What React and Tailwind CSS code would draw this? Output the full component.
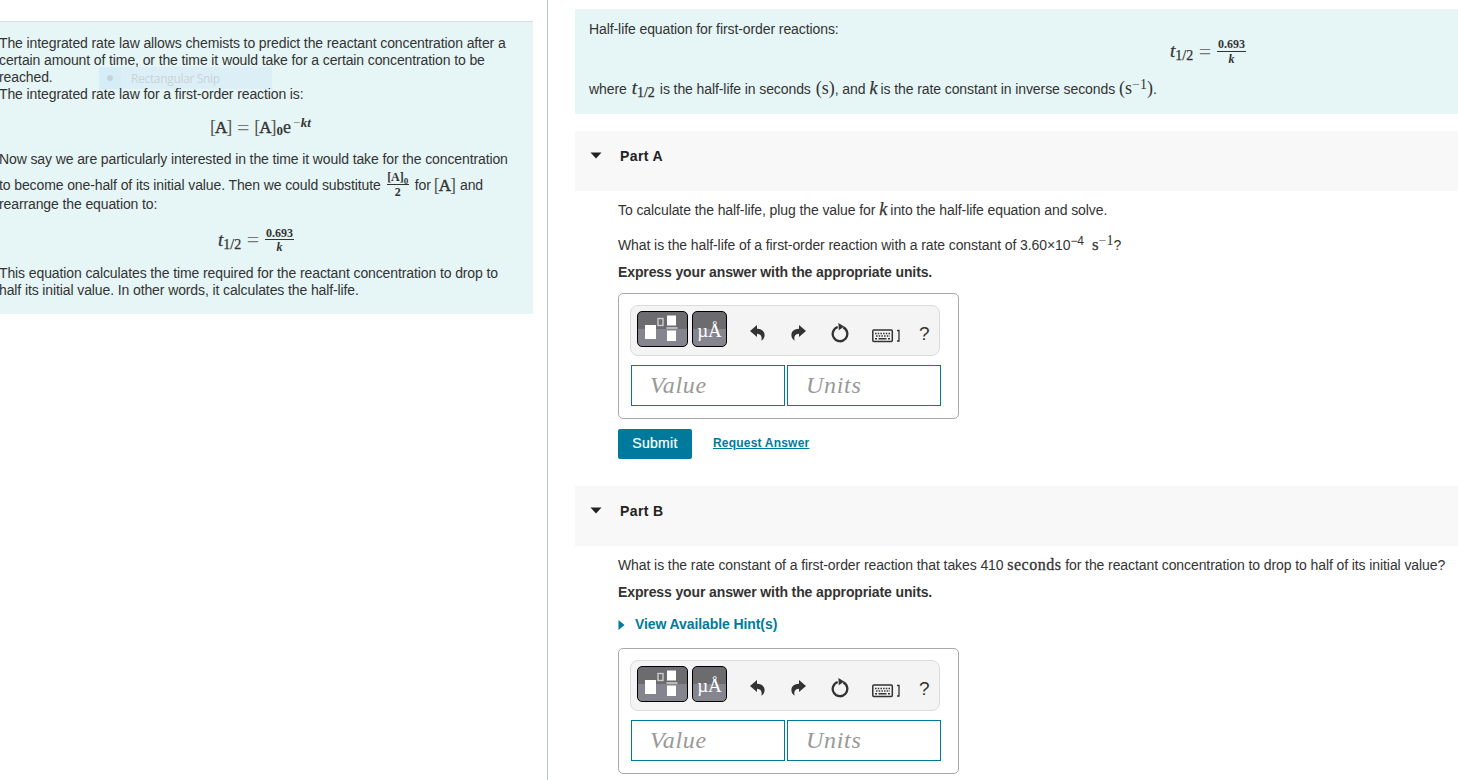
import clsx from "clsx";

const serif = "font-['Liberation_Serif',serif] tracking-normal";

const Fraction = ({ top, bottom, className }) => {
    return (
        <span className={clsx("inline-flex flex-col items-center text-[12px] leading-[12px]", serif, className)}>
            <span className="flex h-[14px] w-full items-center justify-center border-b border-[#333]">{top}</span>
            <span className="flex h-[14px] items-center">{bottom}</span>
        </span>
    );
}

const THalf = ({ className }) => {
    return (
        <span className={clsx("inline-flex items-baseline [-webkit-text-stroke:0.25px_#333]", serif, className)}>
            <i className="text-[19px] leading-none">t</i>
            <span className="relative top-[3px] text-[14px] leading-none">1/2</span>
        </span>
    );
}

// [A] concentration symbol
const Conc = ({ className }) => {
    return (
        <span className={clsx("inline-flex items-center text-[17px]", serif, className)}>
            <span className="text-[18px] text-[#555]">[</span>
            <span className="-mx-[1px] [-webkit-text-stroke:0.5px_#333]">A</span>
            <span className="text-[18px] text-[#555]">]</span>
        </span>
    );
}

const HalfLifeEquation = () => {
    return (
        <div className={clsx("flex h-[29px] w-[76px] items-center justify-between", serif)}>
            <THalf className="-mt-[2px]" />
            <span className="w-[13px] text-center text-[22px] leading-none text-[#777]">=</span>
            <Fraction className="w-[29px] font-bold" top="0.693" bottom={<i>k</i>} />
        </div>
    );
}

const UndoArrow = ({ className }) => {
    return (
        <svg className={className} width="15" height="16" viewBox="0 0 15 16" fill="#333">
            <path d="M0 6 L7 0 V3.8 C12 4 14.6 6.5 14.6 10 C14.6 12.5 13.6 14.3 11.3 15.8 C12.4 11.7 11 9 7 8.8 V12 Z" />
        </svg>
    );
}

const Toolbar = () => {
    return (
        <div className="flex h-[51px] w-[310px] items-start rounded-[8px] border border-[#dcdcdc] bg-[#f4f4f4] pl-[6px] pt-[5px]">
            <div className="h-[36px] w-[51px] rounded-[5px] border border-black bg-linear-to-b from-[#6c6c6e] from-50% to-[#85858f] to-50%">
                <svg width="49" height="34" viewBox="0 0 49 34">
                    <rect x="7" y="13" width="11" height="14" fill="#fff" />
                    <rect x="20" y="6.5" width="5" height="7" fill="none" stroke="#ccc" strokeWidth="1.4" />
                    <rect x="29" y="3.5" width="9" height="10" fill="#fff" />
                    <rect x="28.5" y="15" width="11" height="2" fill="#bbb" />
                    <rect x="29" y="18.5" width="9" height="10.5" fill="#fff" />
                </svg>
            </div>
            <div className={clsx("ml-[4px] flex h-[36px] w-[35px] items-center justify-center rounded-[5px] border border-black bg-linear-to-b from-[#6c6c6e] from-50% to-[#85858f] to-50% pt-[2px] text-[19px] leading-none text-white", serif)}>
                µÅ
            </div>
            <UndoArrow className="ml-[23px] mt-[14px]" />
            <UndoArrow className="ml-[26px] mt-[14px] -scale-x-100" />
            <svg className="ml-[25px] mt-[12px]" width="19" height="20" viewBox="0 0 19 20">
                <path d="M12.6 4.4 A7.3 7.3 0 1 1 7 4" fill="none" stroke="#333" strokeWidth="2.3" transform="translate(-0.3 0)" />
                <path d="M7.4 0 L13.2 3.6 L7.8 7.2 Z" fill="#333" />
            </svg>
            <svg className="ml-[22px] mt-[18px]" width="29" height="14" viewBox="0 0 29 14">
                <rect x="0.8" y="1" width="19.5" height="11.5" rx="1" fill="none" stroke="#333" strokeWidth="1.5" />
                <path d="M3 4.5h15M4 7h14" stroke="#333" strokeWidth="1.6" strokeDasharray="1.5 1.2" />
                <path d="M3 9.8h2M6.5 9.8h8M16 9.8h2" stroke="#333" strokeWidth="1.4" />
                <path d="M25 1.5h2v10.5h-2" fill="none" stroke="#333" strokeWidth="1.3" />
            </svg>
            <span className="ml-[18px] mt-[12px] text-[19px] leading-[22px] text-[#333]">?</span>
        </div>
    );
}

const AnswerBox = () => {
    return (
        <div className="h-[126px] w-[341px] rounded-[5px] border border-[#a9a9a9] pl-[11px] pt-[11px]">
            <Toolbar />
            <div className="ml-px mt-[9px] flex gap-[2px] font-['Liberation_Serif',serif] text-[24px] italic leading-[38px] tracking-[0.7px] text-[#999]">
                <div className="h-[41px] w-[154px] border border-[#007a9c] pl-[18px]">Value</div>
                <div className="h-[41px] w-[154px] border border-[#007a9c] pl-[18px]">Units</div>
            </div>
        </div>
    );
}

const PartHeader = ({ title }) => {
    return (
        <div className="flex h-[60px] items-start bg-[#f8f8f8] pl-[15px] pt-[16px]">
            <svg className="mt-[5px]" width="12" height="7" viewBox="0 0 12 7">
                <path d="M0.5 0.5H11.5L6 6.5Z" fill="#222" />
            </svg>
            <h2 className="ml-[18px] text-[14px] font-bold leading-[18px] tracking-[0.4px] text-[#222]">{title}</h2>
        </div>
    );
}

export default function App() {
    return (
        <div className="flex h-[780px] w-[1458px] overflow-hidden bg-white font-['Liberation_Sans',sans-serif] text-[14px] leading-[17px] text-[#333] whitespace-nowrap">
            {/* left side explanation */}
            <div className="w-[548px] shrink-0 border-r border-[#b9c3d9] pt-[21px] tracking-[-0.11px]">
                <div className="-ml-px h-[293px] w-[534px] border-t border-[#d3dde2] bg-[#e6f6f6] pt-[13px]">
                    <p>The integrated rate law allows chemists to predict the reactant concentration after a</p>
                    <p>certain amount of time, or the time it would take for a certain concentration to be</p>
                    <div className="relative">
                        <p>reached.</p>
                        <div className="absolute left-[100px] top-[-2px] flex h-[22px] w-[173px] items-center bg-[#dceff6] font-['Open_Sans',sans-serif] text-[12px] tracking-[-0.33px] text-[#c8d3d6]">
                            <span className="flex h-full w-[22px] items-center justify-center bg-[#d5edf8]">
                                <span className="size-[6px] rounded-full bg-[#c8d3d6]"></span>
                            </span>
                            <span className="ml-[10px]">Rectangular Snip</span>
                        </div>
                    </div>
                    <p className="relative">The integrated rate law for a first-order reaction is:</p>

                    <div className={clsx("flex h-[48px] items-center pl-[211px]", serif)}>
                        <Conc />
                        <span className="mx-[4px] w-[14px] text-center text-[22px] text-[#777]">=</span>
                        <Conc />
                        <span className="relative top-[3px] text-[13px] font-bold">0</span>
                        <span className="text-[18px] [-webkit-text-stroke:0.25px_#333]">e</span>
                        <span className="relative top-[-5px] ml-px text-[13px] font-bold italic"><span className="font-normal text-[#777]">−</span>kt</span>
                    </div>

                    <p>Now say we are particularly interested in the time it would take for the concentration</p>
                    <div className="flex h-[28px] items-start">
                        <span className="mt-[9px]">to become one-half of its initial value. Then we could substitute</span>
                        <Fraction
                            className="ml-[6px] mt-[3px] w-[22px]"
                            top={<span className="font-bold">[A]<span className="relative top-[3px] text-[9px]">0</span></span>}
                            bottom={<b>2</b>}
                        />
                        <span className="ml-[6px] mt-[9px]">for</span>
                        <Conc className="ml-[3px] mt-[9px]" />
                        <span className="ml-[4px] mt-[9px]">and</span>
                    </div>
                    <p>rearrange the equation to:</p>

                    <div className="flex h-[52px] items-center pl-[219px] pt-[2px]">
                        <HalfLifeEquation />
                    </div>

                    <p>This equation calculates the time required for the reactant concentration to drop to</p>
                    <p>half its initial value. In other words, it calculates the half-life.</p>
                </div>
            </div>

            {/* right side questions */}
            <div className="min-w-0 flex-1 pl-[27px] pt-[9px] tracking-[-0.09px]">
                <div className="h-[105px] bg-[#e6f6f6] pl-[14px] pt-[12px]">
                    <p>Half-life equation for first-order reactions:</p>
                    <div className="-mt-[1px] pl-[581px]">
                        <HalfLifeEquation />
                    </div>
                    <div className="mt-[12px] flex h-[20px] items-baseline">
                        <span>where</span>
                        <THalf className="ml-[5px]" />
                        <span className="ml-[5px]">is the half-life in seconds</span>
                        <span className={clsx("ml-[5px] text-[18px]", serif)}>(s)</span>
                        <span>, and</span>
                        <i className={clsx("ml-[4px] text-[18px] [-webkit-text-stroke:0.25px_#333]", serif)}>k</i>
                        <span className="ml-[3px]">is the rate constant in inverse seconds</span>
                        <span className={clsx("ml-[4px] text-[18px]", serif)}>(s<span className="relative top-[-5px] text-[14px]"><span className="text-[#777]">−</span>1</span>)</span>
                        <span>.</span>
                    </div>
                </div>

                <div className="mt-[17px]">
                    <PartHeader title="Part A" />
                    <div className="pl-[43px]">
                        <div className="mt-[11px] flex h-[17px] items-baseline">
                            <span>To calculate the half-life, plug the value for</span>
                            <i className={clsx("ml-[4px] text-[18px] leading-[14px] [-webkit-text-stroke:0.25px_#333]", serif)}>k</i>
                            <span className="ml-[3px]">into the half-life equation and solve.</span>
                        </div>
                        <div className="mt-[18px] flex h-[17px] items-baseline">
                            <span>What is the half-life of a first-order reaction with a rate constant of 3.60×10</span>
                            <span className="relative top-[-5px] text-[12px] leading-none">−4</span>
                            <span className={clsx("ml-[8px] text-[17px] leading-[14px] [-webkit-text-stroke:0.25px_#333]", serif)}>s</span>
                            <span className={clsx("relative top-[-5px] text-[14px] leading-none", serif)}><span className="text-[#777]">−</span>1</span>
                            <span>?</span>
                        </div>
                        <p className="mt-[10px] font-bold tracking-[-0.12px]">Express your answer with the appropriate units.</p>
                        <div className="mt-[12px]">
                            <AnswerBox />
                        </div>
                        <div className="mt-[10px] flex h-[30px] items-center">
                            <button className="h-[30px] w-[74px] rounded-[2px] bg-[#007a9c] pb-[2px] text-[14px] tracking-[0.3px] text-white [-webkit-text-stroke:0.2px_#fff]">Submit</button>
                            <a className="ml-[21px] pb-[2px] text-[12px] font-bold tracking-[0.2px] text-[#007a9c] underline">Request Answer</a>
                        </div>
                    </div>
                </div>

                <div className="mt-[27px]">
                    <PartHeader title="Part B" />
                    <div className="pl-[43px]">
                        <p className="mt-[11px] h-[17px]">
                            What is the rate constant of a first-order reaction that takes 410 <span className="font-['Liberation_Serif',serif] text-[16px] leading-none tracking-[0.5px] [-webkit-text-stroke:0.3px_#333]">seconds</span> for the reactant concentration to drop to half of its initial value?
                        </p>
                        <p className="mt-[10px] font-bold tracking-[-0.12px]">Express your answer with the appropriate units.</p>
                        <div className="mt-[15px] flex items-center font-bold text-[#007a9c]">
                            <svg width="7" height="10" viewBox="0 0 7 10">
                                <path d="M0.5 0L6.5 5L0.5 10Z" fill="#007a9c" />
                            </svg>
                            <span className="ml-[10px]">View Available Hint(s)</span>
                        </div>
                        <div className="mt-[15px]">
                            <AnswerBox />
                        </div>
                    </div>
                </div>
            </div>
        </div>
    );
}
